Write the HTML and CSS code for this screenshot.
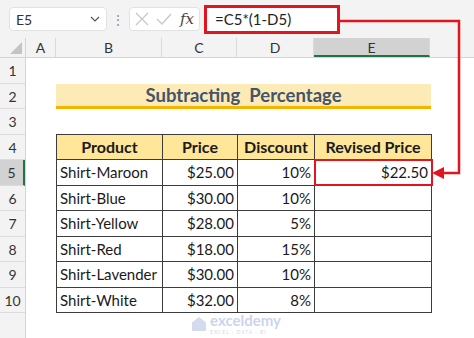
FILE: index.html
```html
<!DOCTYPE html>
<html lang="en">
<head>
    <meta charset="UTF-8">
    <title>Subtracting Percentage</title>
    <link rel="stylesheet" href="styles.css">
</head>
<body>
<div class="page">

    <div class="toolbar">
        <div class="namebox">
            <span>E5</span>
            <svg class="chevron" width="10" height="6" viewBox="0 0 10 6"><path d="M1 1 L5 5 L9 1" fill="none" stroke="#555" stroke-width="1.2"/></svg>
        </div>
        <div class="dots">⋮</div>
        <div class="fxbox">
            <svg width="14" height="14" viewBox="0 0 14 14"><path d="M1 1 L13 13 M13 1 L1 13" stroke="#c8c8c8" stroke-width="1.3"/></svg>
            <svg width="16" height="12" viewBox="0 0 16 12"><path d="M1 6 L6 11 L15 1" fill="none" stroke="#c8c8c8" stroke-width="1.3"/></svg>
            <span class="fx">fx</span>
        </div>
        <div class="formula">=C5*(1-D5)</div>
    </div>

    <div class="sheet">
        <div class="corner"><span class="tri"></span></div>
        <div class="colheads">
            <div class="colhead col-a">A</div>
            <div class="colhead col-b">B</div>
            <div class="colhead col-c">C</div>
            <div class="colhead col-d">D</div>
            <div class="colhead col-e selected">E</div>
            <div class="colhead col-rest"></div>
        </div>
        <div class="rowheads">
            <div class="rowhead">1</div>
            <div class="rowhead">2</div>
            <div class="rowhead">3</div>
            <div class="rowhead">4</div>
            <div class="rowhead selected">5</div>
            <div class="rowhead">6</div>
            <div class="rowhead">7</div>
            <div class="rowhead">8</div>
            <div class="rowhead">9</div>
            <div class="rowhead">10</div>
            <div class="rowhead"></div>
        </div>
        <div class="cells">
            <div class="title">Subtracting&nbsp; Percentage</div>
            <table class="data">
                <colgroup>
                    <col class="w-b"><col class="w-c"><col class="w-d"><col class="w-e">
                </colgroup>
                <tr class="head"><th>Product</th><th>Price</th><th>Discount</th><th>Revised Price</th></tr>
                <tr><td>Shirt-Maroon</td><td class="num">$25.00</td><td class="num">10%</td><td class="num active">$22.50</td></tr>
                <tr><td>Shirt-Blue</td><td class="num">$30.00</td><td class="num">10%</td><td></td></tr>
                <tr><td>Shirt-Yellow</td><td class="num">$28.00</td><td class="num">5%</td><td></td></tr>
                <tr><td>Shirt-Red</td><td class="num">$18.00</td><td class="num">15%</td><td></td></tr>
                <tr><td>Shirt-Lavender</td><td class="num">$30.00</td><td class="num">10%</td><td></td></tr>
                <tr><td>Shirt-White</td><td class="num">$32.00</td><td class="num">8%</td><td></td></tr>
            </table>
        </div>
    </div>

    <!-- connector from the formula to the result cell -->
    <svg class="connector" width="474" height="338" viewBox="0 0 474 338">
        <path d="M340 21 H459 V173 H441" fill="none" stroke="#e0151f" stroke-width="2.5"/>
        <polygon points="432,173 444,167 444,179" fill="#e0151f"/>
    </svg>

    <div class="watermark">
        <span class="logo"></span>
        <div>
            <div class="brand">exceldemy</div>
            <div class="tag">EXCEL · DATA · BI</div>
        </div>
    </div>
</div>
</body>
</html>
```

FILE: styles.css
```css
html, body {
    margin: 0;
    padding: 0;
    background: #fff;
}
body {
    font-family: Lato, "Open Sans", sans-serif;
    color: #222;
}
.page {
    position: relative;
    width: 474px;
    height: 338px;
    overflow: hidden;
}

/* formula bar */
.toolbar {
    height: 38px;
    background: #f3f3f3;
    display: flex;
    align-items: center;
    padding-left: 9px;
    box-sizing: border-box;
}
.namebox {
    width: 98px;
    height: 24px;
    box-sizing: border-box;
    background: #fff;
    border: 1px solid #e2e2e2;
    border-radius: 4px;
    display: flex;
    align-items: center;
    justify-content: space-between;
    padding: 0 6px 0 6px;
    font-size: 14px;
    color: #333;
}
.dots {
    width: 22px;
    text-align: center;
    color: #999;
    font-size: 14px;
}
.fxbox {
    width: 71px;
    height: 24px;
    box-sizing: border-box;
    background: #fff;
    border: 1px solid #e2e2e2;
    border-radius: 4px;
    display: flex;
    align-items: center;
    justify-content: space-between;
    padding: 0 5px 0 5px;
}
.fx {
    font-family: "DejaVu Serif", "Liberation Serif", serif;
    font-style: italic;
    font-size: 15px;
    color: #444;
}
.formula {
    margin-left: 4px;
    width: 136px;
    height: 29px;
    box-sizing: border-box;
    background: #fff;
    border: 3px solid #e0151f;
    display: flex;
    align-items: center;
    padding-left: 8px;
    font-size: 15px;
    color: #222;
}

/* sheet */
.sheet {
    display: grid;
    grid-template-columns: 26px 1fr;
    grid-template-rows: 20px 1fr;
}
.corner {
    background: #f3f3f3;
    border-right: 1px solid #d4d4d4;
    border-bottom: 1px solid #d4d4d4;
    position: relative;
}
.tri {
    position: absolute;
    right: 3px;
    bottom: 3px;
    width: 0;
    height: 0;
    border-left: 12px solid transparent;
    border-bottom: 12px solid #c4c4c4;
}
.colheads {
    display: flex;
    background: #f3f3f3;
    border-bottom: 1px solid #d4d4d4;
}
.colhead {
    box-sizing: border-box;
    border-right: 1px solid #d9d9d9;
    text-align: center;
    font-size: 14px;
    line-height: 19px;
    color: #333;
}
.col-a { width: 30px; }
.col-b { width: 106px; }
.col-c { width: 75px; }
.col-d { width: 77px; }
.col-e { width: 116px; }
.col-rest { flex: 1; border-right: none; }
.colhead.selected {
    background: #d2d2d2;
    border-bottom: 2px solid #217346;
}
.rowheads {
    background: #f3f3f3;
    border-right: 1px solid #d4d4d4;
}
.rowhead {
    height: 25.5px;
    box-sizing: border-box;
    border-bottom: 1px solid #dcdcdc;
    text-align: center;
    line-height: 26px;
    font-size: 14px;
    color: #333;
}
.rowhead.selected {
    background: #d2d2d2;
    border-right: 2px solid #217346;
}

.cells {
    display: grid;
    grid-template-columns: 30px 375px 1fr;
    grid-template-rows: repeat(3, 25.5px) auto;
    align-items: start;
}
.title {
    grid-column: 2;
    grid-row: 2;
    height: 25.5px;
    box-sizing: border-box;
    background: #fdebb7;
    border-bottom: 3px solid #f4b400;
    text-align: center;
    font-weight: bold;
    font-size: 18.5px;
    line-height: 23px;
    color: #44546a;
}
.data {
    grid-column: 2;
    grid-row: 4;
    align-self: start;
    border-collapse: collapse;
    table-layout: fixed;
    width: 375px;
    margin-top: -1px;
    font-size: 15px;
}
.w-b { width: 106px; }
.w-c { width: 75px; }
.w-d { width: 77px; }
.w-e { width: 117px; }
.data tr { height: 25.5px; }
.data th, .data td {
    border: 1.5px solid #3c3c3c;
    padding: 0 3px;
    line-height: 18px;
    white-space: nowrap;
    color: #1a1a1a;
}
.data th {
    background: #ffe699;
    font-size: 16px;
    font-weight: bold;
}
.data td { text-align: left; }
.data td.num { text-align: right; }
.data td.active {
    outline: 2.5px solid #e0151f;
    outline-offset: -1px;
}

/* overlays */
.connector {
    position: absolute;
    left: 0;
    top: 0;
    pointer-events: none;
}
.watermark {
    position: absolute;
    left: 192px;
    top: 313px;
    display: flex;
    align-items: center;
    gap: 4px;
    opacity: 0.45;
}
.logo {
    width: 14px;
    height: 14px;
    background: #9fb0d8;
    clip-path: polygon(50% 0, 100% 40%, 100% 100%, 0 100%, 0 40%);
}
.brand {
    font-size: 15px;
    font-weight: bold;
    color: #8fa2d4;
    line-height: 15px;
}
.tag {
    font-size: 5px;
    line-height: 6px;
    margin-top: 1px;
    color: #9aa8cc;
    letter-spacing: 1px;
}
```
